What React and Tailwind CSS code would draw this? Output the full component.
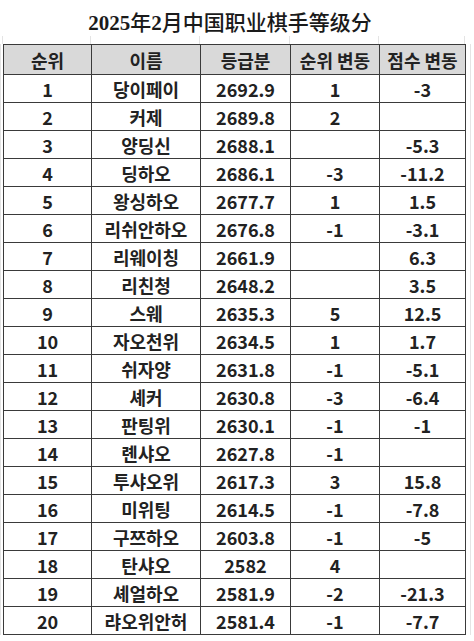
import React from "react";

const rows = [
  ["1", "당이페이", "2692.9", "1", "-3"],
  ["2", "커제", "2689.8", "2", ""],
  ["3", "양딩신", "2688.1", "", "-5.3"],
  ["4", "딩하오", "2686.1", "-3", "-11.2"],
  ["5", "왕싱하오", "2677.7", "1", "1.5"],
  ["6", "리쉬안하오", "2676.8", "-1", "-3.1"],
  ["7", "리웨이칭", "2661.9", "", "6.3"],
  ["8", "리친청", "2648.2", "", "3.5"],
  ["9", "스웨", "2635.3", "5", "12.5"],
  ["10", "자오천위", "2634.5", "1", "1.7"],
  ["11", "쉬자양", "2631.8", "-1", "-5.1"],
  ["12", "셰커", "2630.8", "-3", "-6.4"],
  ["13", "판팅위", "2630.1", "-1", "-1"],
  ["14", "롄샤오", "2627.8", "-1", ""],
  ["15", "투샤오위", "2617.3", "3", "15.8"],
  ["16", "미위팅", "2614.5", "-1", "-7.8"],
  ["17", "구쯔하오", "2603.8", "-1", "-5"],
  ["18", "탄샤오", "2582", "4", ""],
  ["19", "셰얼하오", "2581.9", "-2", "-21.3"],
  ["20", "랴오위안허", "2581.4", "-1", "-7.7"],
];

const headers = ["순위", "이름", "등급분", "순위 변동", "점수 변동"];

export default function App() {
  return (
    <div
      className="w-[474px] h-[641px] bg-white overflow-hidden text-[#222222]"
      style={{ fontFamily: "'Noto Sans CJK KR', 'Noto Sans', sans-serif" }}
    >
      <div
        className="h-[36px] flex items-end justify-center pb-[2px] pr-[14px] text-[21px] font-medium leading-none text-[#1a1a1a]"
        style={{ fontFamily: "'Liberation Serif', 'Noto Sans CJK SC', serif" }}
      >
        <span className="font-bold">2025</span>
        <span>年</span>
        <span className="font-bold">2</span>
        <span>月中国职业棋手等级分</span>
      </div>
      <div className="h-[8px] flex">
        <div className="w-[3px] border-r border-[#e4e4e4]" />
        <div className="grid grid-cols-[88px_109px_90px_89px_86px] flex-none">
          <div className="border-r border-[#e4e4e4]" />
          <div className="border-r border-[#e4e4e4]" />
          <div className="border-r border-[#e4e4e4]" />
          <div className="border-r border-[#e4e4e4]" />
          <div className="border-r border-[#e4e4e4]" />
        </div>
      </div>
      <div className="flex">
        <div className="w-[3px] border-l border-[#e4e4e4] flex-none" />
        <div className="border-l border-t border-[#3a3a3a] grid grid-cols-[88px_109px_90px_89px_86px] flex-none">
          {headers.map((h) => (
            <div
              key={h}
              className="h-[30px] bg-[#d9d9d9] border-r border-b border-[#3a3a3a] flex items-center justify-center text-[18px] font-bold leading-none"
            >
              {h}
            </div>
          ))}
          {rows.map((r) =>
            r.map((c, i) => (
              <div
                key={r[0] + "-" + i}
                className="h-[28px] border-r border-b border-[#3a3a3a] flex items-center justify-center text-[18px] font-bold leading-none"
              >
                {c}
              </div>
            ))
          )}
        </div>
        <div className="w-[5px] border-r border-[#e4e4e4] flex-none" />
      </div>
    </div>
  );
}
